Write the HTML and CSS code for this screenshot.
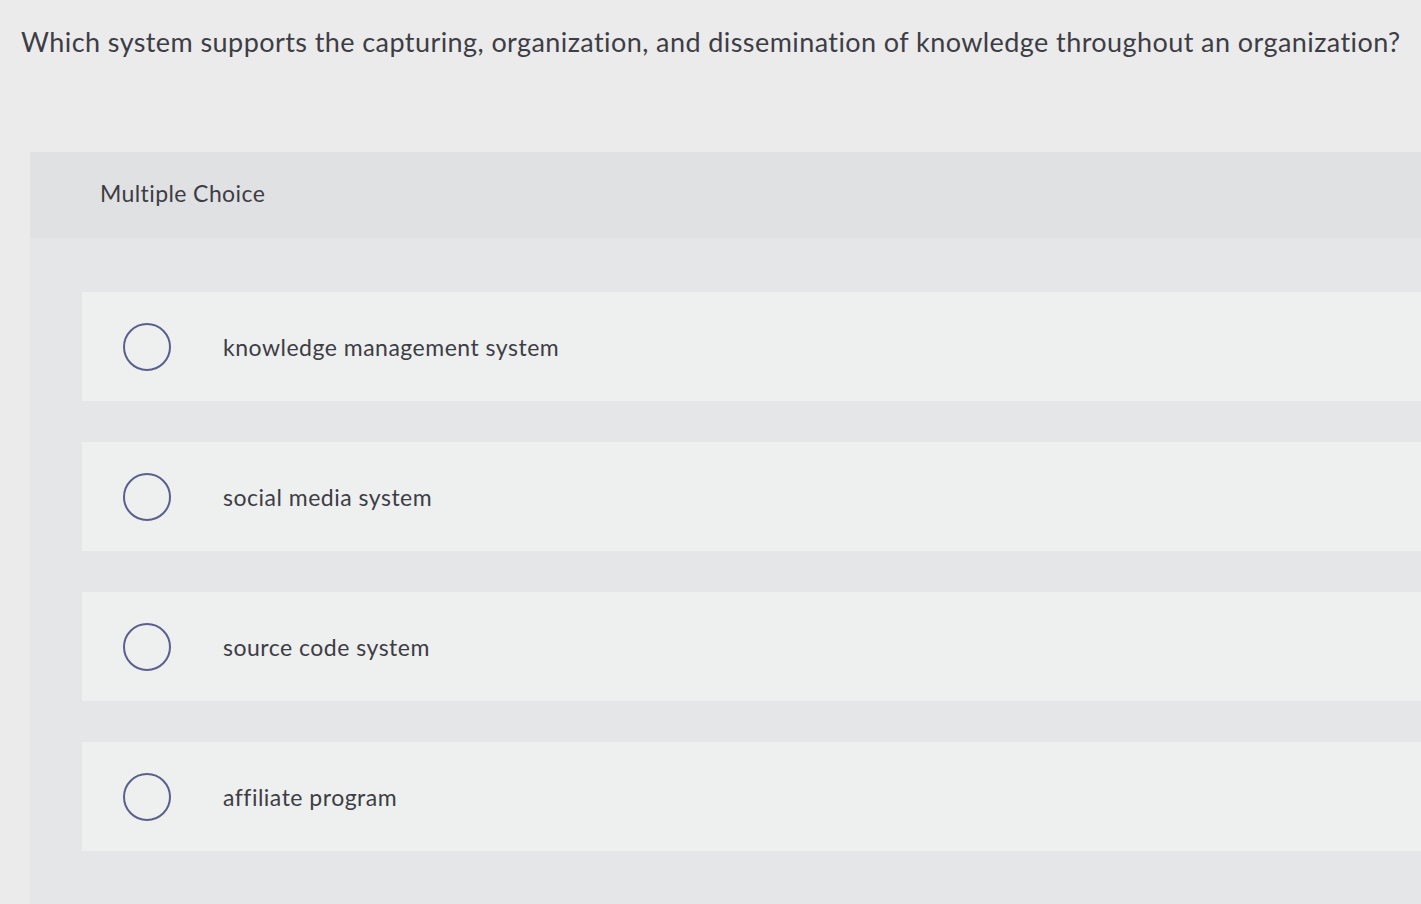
FILE: index.html
```html
<!DOCTYPE html>
<html lang="en">
<head>
<meta charset="utf-8">
<title>Multiple Choice</title>
<link rel="stylesheet" href="styles.css">
</head>
<body>
<h1 class="question">Which system supports the capturing, organization, and dissemination of knowledge throughout an organization?</h1>
<section class="panel">
  <div class="panel-header">Multiple Choice</div>
  <div class="panel-body">
    <label class="option"><span class="radio"></span><span class="option-text">knowledge management system</span></label>
    <label class="option"><span class="radio"></span><span class="option-text">social media system</span></label>
    <label class="option"><span class="radio"></span><span class="option-text">source code system</span></label>
    <label class="option"><span class="radio"></span><span class="option-text">affiliate program</span></label>
  </div>
</section>
</body>
</html>
```
FILE: styles.css
```css
html, body {
  margin: 0;
  padding: 0;
}
body {
  height: 100vh;
  overflow: hidden;
  display: flex;
  flex-direction: column;
  background: #ebebeb;
  font-family: Lato, "Open Sans", sans-serif;
  color: #3d3d45;
}
.question {
  margin: 0;
  padding: 26px 0 0 21px;
  font-size: 27px;
  font-weight: 400;
  line-height: 32px;
  white-space: nowrap;
  letter-spacing: 0.42px;
}
.panel {
  flex: 1;
  margin: 94px 0 0 30px;
  background: #e5e6e8;
  overflow: hidden;
}
.panel-header {
  height: 86px;
  background: #e0e1e3;
  display: flex;
  align-items: center;
  padding-left: 70px;
  padding-bottom: 4px;
  box-sizing: border-box;
  font-size: 23px;
  letter-spacing: 0.4px;
}
.panel-body {
  padding: 54px 0 0 52px;
  display: flex;
  flex-direction: column;
  gap: 41px;
}
.option {
  display: flex;
  align-items: center;
  height: 109px;
  background: #eeefef;
  padding-left: 41px;
  font-size: 23px;
  letter-spacing: 0.5px;
}
.radio {
  width: 44px;
  height: 44px;
  border: 2.5px solid #5b5f8e;
  border-radius: 50%;
  flex: none;
}
.option-text {
  margin-left: 52px;
}
```
